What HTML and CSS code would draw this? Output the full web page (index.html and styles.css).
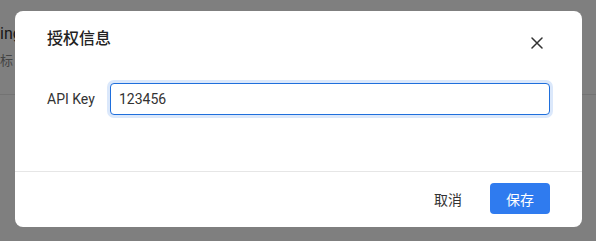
FILE: index.html
```html
<!DOCTYPE html>
<html lang="zh-CN">
<head>
<meta charset="utf-8">
<title>授权信息</title>
<link rel="stylesheet" href="styles.css">
</head>
<body>
<div class="page">
  <div class="page-head">
    <div class="page-title">ing</div>
    <div class="page-sub">标</div>
  </div>
  <div class="page-rule"></div>
</div>
<div class="mask"></div>
<div class="modal">
  <div class="modal-header">
    <div class="modal-title">授权信息</div>
    <button class="modal-close" aria-label="关闭">
      <svg width="12" height="12" viewBox="0 0 12 12"><path d="M1 1L11 11M11 1L1 11" stroke="#333" stroke-width="1.5" stroke-linecap="round"/></svg>
    </button>
  </div>
  <div class="modal-body">
    <label class="field-label">API Key</label>
    <input class="field-input" type="text" value="123456">
  </div>
  <div class="modal-footer">
    <button class="btn btn-text">取消</button>
    <button class="btn btn-primary">保存</button>
  </div>
</div>
</body>
</html>
```
FILE: styles.css
```css
* { box-sizing: border-box; }
html, body { margin: 0; padding: 0; }
body {
  width: 596px;
  height: 241px;
  overflow: hidden;
  position: relative;
  background: #fff;
  font-family: Roboto, "Noto Sans CJK SC", sans-serif;
}
.page { padding-top: 24px; }
.page-title { font-size: 16px; line-height: 20px; color: #333; }
.page-sub { margin-top: 9px; font-size: 13px; line-height: 16px; color: #888; }
.page-rule { margin-top: 25px; height: 1px; background: #e6e6e6; }
.mask {
  position: absolute; inset: 0;
  background: rgba(0,0,0,0.5);
}
.modal {
  position: absolute;
  left: 15px; top: 11px;
  width: 567px; height: 216px;
  background: #fff;
  border-radius: 8px;
  display: flex; flex-direction: column;
}
.modal-header {
  height: 56px;
  padding: 16px 32px 0 32px;
  display: flex; align-items: flex-start; justify-content: space-between;
}
.modal-title {
  font-size: 16px; line-height: 24px; font-weight: 500; color: #222;
}
.modal-close {
  width: 24px; height: 24px; margin-top: 4px; margin-right: 1px;
  border: 0; background: none; padding: 0;
  display: flex; align-items: center; justify-content: center;
}
.modal-body {
  flex: 1;
  padding: 16px 32px 0 32px;
  display: flex; align-items: flex-start;
}
.field-label {
  width: 63px; font-size: 14px; line-height: 32px; color: #333;
}
.field-input {
  flex: 1; height: 32px;
  border: 1.5px solid #1f6fdc; border-radius: 4px;
  box-shadow: 0 0 0 3px #dbe8fb;
  padding: 0 8px;
  font: 14px Roboto, "Noto Sans CJK SC", sans-serif;
  color: #333; outline: none;
}
.modal-footer {
  height: 56px;
  border-top: 1px solid #e6e6e6;
  padding: 11px 32px 0 32px;
  display: flex; justify-content: flex-end; align-items: flex-start; gap: 12px;
}
.btn {
  width: 60px; height: 31px;
  border: 0; border-radius: 4px; padding: 0;
  font: 14px Roboto, "Noto Sans CJK SC", sans-serif;
}
.btn-text { background: none; color: #333; }
.btn-primary { background: #2f7bef; color: #fff; }
```
